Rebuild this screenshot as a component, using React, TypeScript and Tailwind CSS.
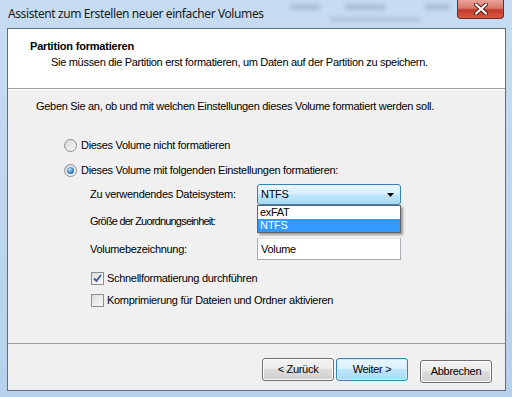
const Radio = ({ checked = false }: { checked?: boolean }) => (
  <span className="w-[13px] h-[13px] rounded-full border border-[#8e8f8f] bg-gradient-to-br from-[#d6d6d6] to-[#fbfbfb] flex items-center justify-center shrink-0">
    {checked && (
      <span className="w-[7px] h-[7px] rounded-full bg-[radial-gradient(circle_at_40%_35%,#bfe4ff,#2f77c1_60%,#1d4e8d)]" />
    )}
  </span>
)

const Check = ({ checked = false }: { checked?: boolean }) => (
  <span className="w-[13px] h-[13px] border border-[#8e8f8f] bg-gradient-to-br from-[#dcdcdc] to-[#fbfbfb] flex items-center justify-center shrink-0">
    {checked && (
      <svg width="9" height="9" viewBox="0 0 9 9">
        <path d="M1 4.5 L3.5 7 L8 1" fill="none" stroke="#3a56a8" strokeWidth="1.8" />
      </svg>
    )}
  </span>
)

const Btn = ({ label, primary = false }: { label: string; primary?: boolean }) => (
  <button
    className={
      primary
        ? "w-[72px] h-[23px] rounded-[3px] border border-[#3c7fb1] bg-[linear-gradient(#eaf6fd,#d9f0fc_50%,#bee6fd_50%,#a7d9f5)] text-[11px] tracking-[-0.3px] text-black shadow-[inset_0_0_0_1px_#cdeaff]"
        : "w-[72px] h-[23px] rounded-[3px] border border-[#707070] bg-[linear-gradient(#f2f2f2,#ebebeb_50%,#dddddd_50%,#cfcfcf)] text-[11px] tracking-[-0.3px] text-black shadow-[inset_0_0_0_1px_#fcfcfc]"
    }
  >
    {label}
  </button>
)

export default function App() {
  return (
    <div className="w-[512px] h-[397px] flex flex-col bg-[linear-gradient(#c6dcf2,#b7d1ec)] font-['Liberation_Sans',Arial,sans-serif] text-black overflow-hidden relative">
      {/* blurred glass blobs */}
      <div className="absolute left-[290px] top-[4px] w-[30px] h-[6px] bg-[#7f95ad] opacity-40 blur-[2px]" />
      <div className="absolute left-[345px] top-[4px] w-[40px] h-[6px] bg-[#7f95ad] opacity-40 blur-[2px]" />
      <div className="absolute left-[425px] top-[4px] w-[25px] h-[6px] bg-[#7f95ad] opacity-40 blur-[2px]" />
      <div className="absolute left-[330px] top-[17px] w-[90px] h-[5px] bg-[#7f95ad] opacity-30 blur-[2px]" />

      <div className="h-[28px] flex relative">
        <div className="pl-[8px] self-center text-[12px] text-[#1a1a1a] font-['Noto_Sans',sans-serif] tracking-[-0.4px]">
          Assistent zum Erstellen neuer einfacher Volumes
        </div>
        <div className="ml-auto mr-[8px] w-[47px] h-[19px] rounded-b-[4px] border border-t-0 border-[#6d2b26] bg-[linear-gradient(#eba398,#d8786b_45%,#c43a28_55%,#d65a47)] flex items-center justify-center">
          <svg width="16" height="12" viewBox="0 0 16 12">
            <path d="M3 1.5 L13 10.5 M13 1.5 L3 10.5" stroke="#4a1d1a" strokeWidth="4" strokeLinecap="round" />
            <path d="M3 1.5 L13 10.5 M13 1.5 L3 10.5" stroke="#ffffff" strokeWidth="2.2" strokeLinecap="round" />
          </svg>
        </div>
      </div>

      <div className="flex-1 ml-[7px] mr-[6px] mb-[6px] border border-[#5f6f82] bg-[#f0f0f0] flex flex-col tracking-[-0.3px]">
        <div className="h-[60px] bg-white border-b border-[#a0a0a0] pt-[11px] pl-[22px]">
          <div className="text-[11px] font-bold leading-[13px] tracking-[-0.2px]">Partition formatieren</div>
          <div className="text-[11px] leading-[13px] mt-[3px] pl-[21px]">
            Sie müssen die Partition erst formatieren, um Daten auf der Partition zu speichern.
          </div>
        </div>

        <div className="flex-1 pt-[10px] pl-[28px] text-[11px] leading-[13px] border-t border-white">
          <div>Geben Sie an, ob und mit welchen Einstellungen dieses Volume formatiert werden soll.</div>

          <div className="mt-[26px] pl-[28px] flex flex-col gap-[12px]">
            <div className="flex items-center gap-[4px]">
              <Radio />
              <span>Dieses Volume nicht formatieren</span>
            </div>
            <div className="flex items-center gap-[4px]">
              <Radio checked />
              <span>Dieses Volume mit folgenden Einstellungen formatieren:</span>
            </div>
          </div>

          <div className="mt-[7px] pl-[54px] flex flex-col gap-[6px]">
            <div className="flex items-center">
              <span className="w-[167px]">Zu verwendendes Dateisystem:</span>
              <div className="relative">
                <div className="w-[144px] h-[21px] rounded-[3px] border border-[#3c7fb1] bg-[linear-gradient(#eaf6fd,#d9f0fc_45%,#bee6fd_55%,#a7d9f5)] flex items-center pl-[3px] pr-[6px]">
                  <span>NTFS</span>
                  <svg className="ml-auto" width="7" height="4" viewBox="0 0 7 4">
                    <path d="M0 0 H7 L3.5 4 Z" fill="#000" />
                  </svg>
                </div>
                <div className="absolute left-0 top-[21px] w-[144px] bg-white border border-[#646464] shadow-[2px_2px_2px_rgba(0,0,0,0.35)] z-10">
                  <div className="h-[13px] pl-[2px] leading-[13px]">exFAT</div>
                  <div className="h-[13px] pl-[2px] leading-[13px] bg-[#3399ff] text-white">NTFS</div>
                </div>
              </div>
            </div>
            <div className="flex items-center">
              <span className="w-[167px] tracking-[-0.8px]">Größe der Zuordnungseinheit:</span>
              <div className="w-[144px] h-[21px] rounded-[3px] border border-[#acacac] bg-[linear-gradient(#f2f2f2,#e5e5e5)]" />
            </div>
            <div className="flex items-center">
              <span className="w-[167px]">Volumebezeichnung:</span>
              <div className="w-[144px] h-[22px] border border-[#abadb3] border-t-[#e3e3e3] bg-white flex items-center pl-[3px]">
                Volume
              </div>
            </div>
          </div>

          <div className="mt-[12px] pl-[55px] flex flex-col gap-[9px]">
            <div className="flex items-center gap-[3px]">
              <Check checked />
              <span>Schnellformatierung durchführen</span>
            </div>
            <div className="flex items-center gap-[3px]">
              <Check />
              <span>Komprimierung für Dateien und Ordner aktivieren</span>
            </div>
          </div>
        </div>

        <div className="h-[47px] border-t border-[#a0a0a0] pt-[14px] pr-[13px] flex justify-end items-start">
          <div className="flex gap-[2px]">
            <Btn label="< Zurück" />
            <Btn label="Weiter >" primary />
          </div>
          <div className="ml-[12px]">
            <Btn label="Abbrechen" />
          </div>
        </div>
      </div>
    </div>
  )
}
